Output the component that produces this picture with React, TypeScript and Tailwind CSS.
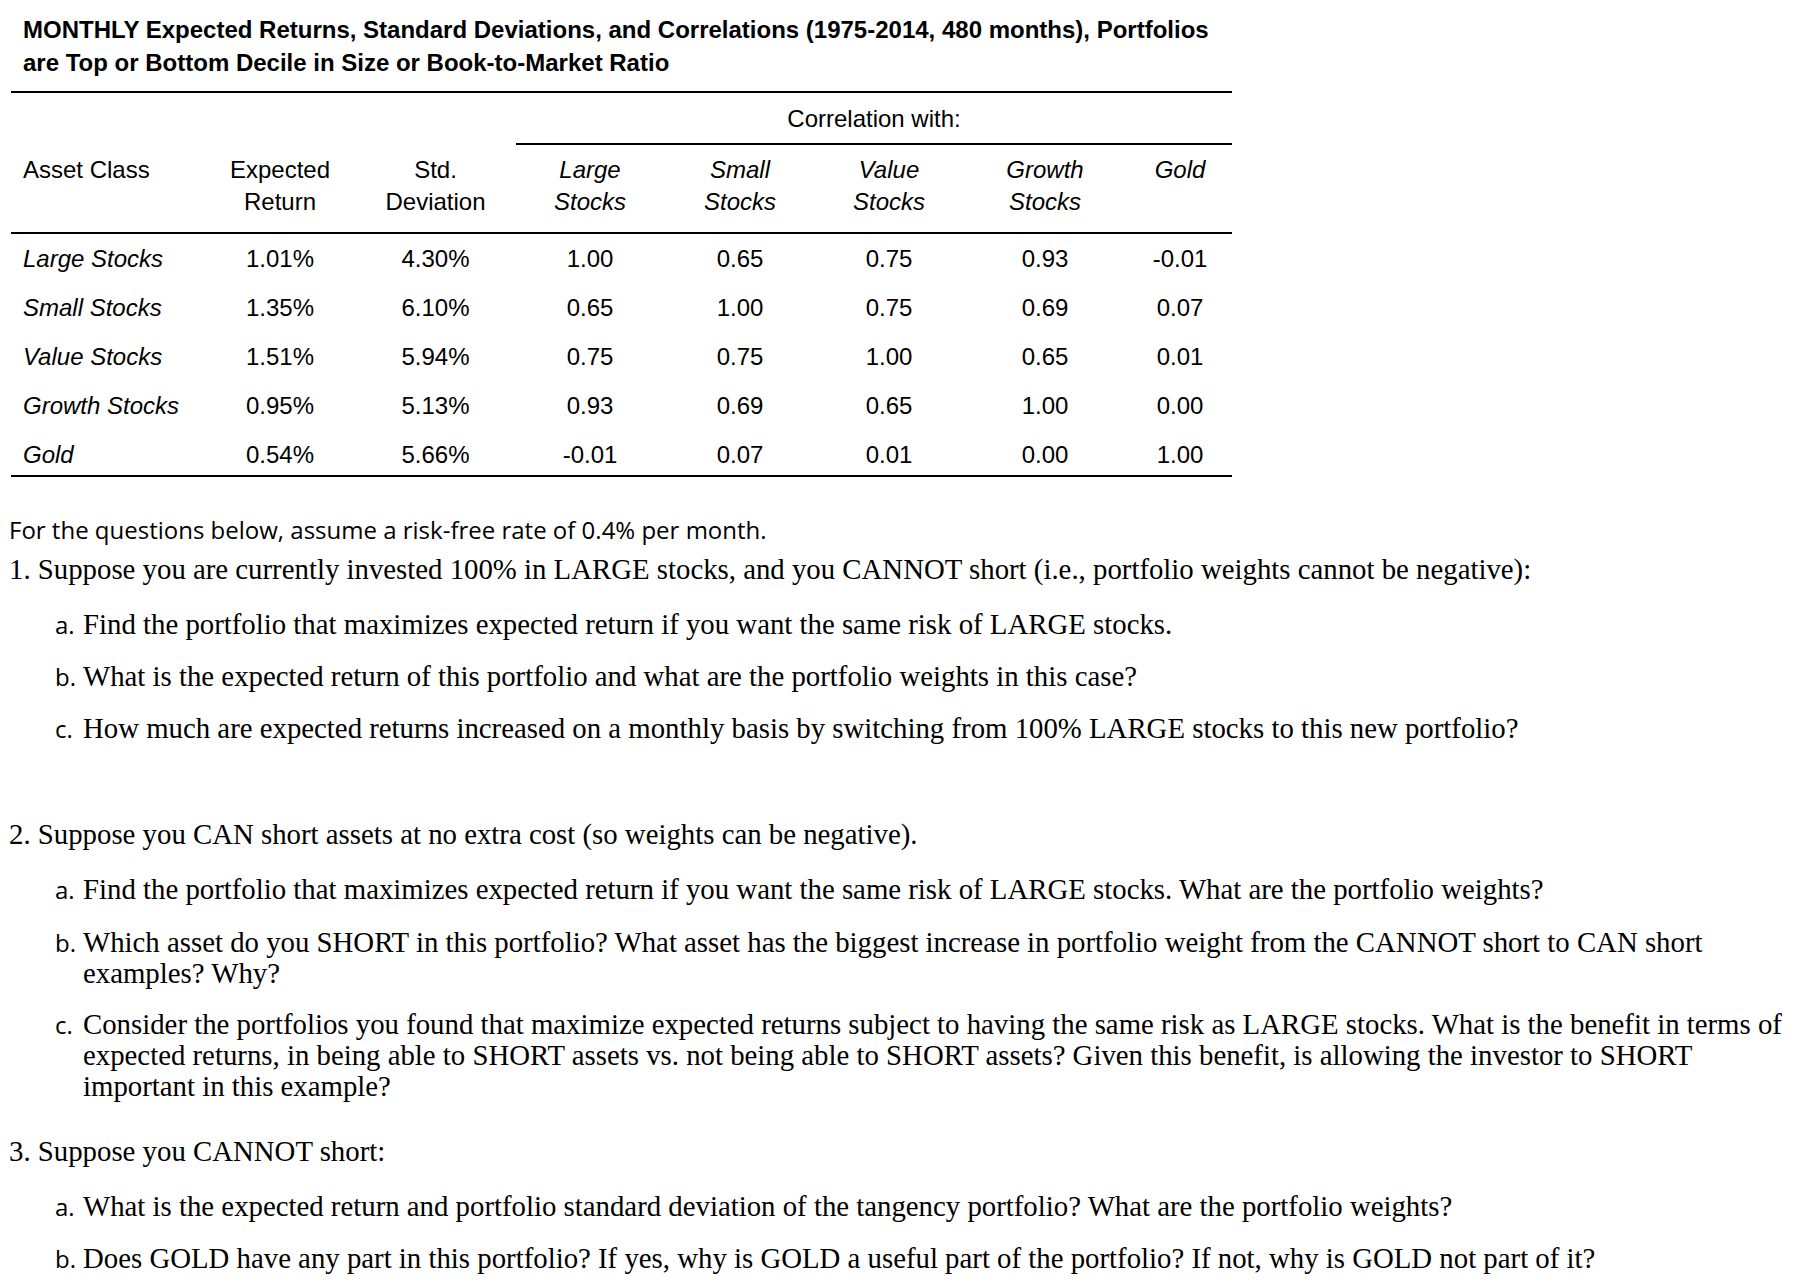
import React from "react";

const COLS = "grid grid-cols-[194px_150px_161px_148px_152px_146px_166px_104px]";

const rows: [string, string, string, string[]][] = [
  ["Large Stocks", "1.01%", "4.30%", ["1.00", "0.65", "0.75", "0.93", "-0.01"]],
  ["Small Stocks", "1.35%", "6.10%", ["0.65", "1.00", "0.75", "0.69", "0.07"]],
  ["Value Stocks", "1.51%", "5.94%", ["0.75", "0.75", "1.00", "0.65", "0.01"]],
  ["Growth Stocks", "0.95%", "5.13%", ["0.93", "0.69", "0.65", "1.00", "0.00"]],
  ["Gold", "0.54%", "5.66%", ["-0.01", "0.07", "0.01", "0.00", "1.00"]],
];

function Sub({ label, lines, className }: { label: string; lines: string[]; className: string }) {
  return (
    <div className={`flex items-start pl-[55px] leading-[31px] ${className}`}>
      <span className="w-[28px] shrink-0 h-[31px] font-['Open_Sans',sans-serif] text-[24px] leading-[31px]">{label}</span>
      <div className="font-['Liberation_Serif',serif] text-[28.8px] leading-[31px]">
        {lines.map((l, i) => (
          <div key={i} className="h-[31px] whitespace-nowrap">
            {l}
          </div>
        ))}
      </div>
    </div>
  );
}

function Main({ text, className }: { text: string; className: string }) {
  return (
    <div className={`h-[31px] pl-[9px] whitespace-nowrap font-['Liberation_Serif',serif] text-[28.8px] leading-[31px] ${className}`}>
      {text}
    </div>
  );
}

export default function App() {
  return (
    <div className="min-h-[1282px] w-full bg-white text-black overflow-hidden">
      <div className="ml-[11px] w-[1221px] font-['Liberation_Sans',Arial,sans-serif] text-[24px]">
        <div className="pl-[12px] pt-[13px] font-bold leading-[33px] whitespace-nowrap">
          MONTHLY Expected Returns, Standard Deviations, and Correlations (1975-2014, 480 months), Portfolios
          <br />
          are Top or Bottom Decile in Size or Book-to-Market Ratio
        </div>
        <div className="mt-[12px] border-t-2 border-black">
          <div className={COLS}>
            <div className="col-start-4 col-span-5 h-[52px] border-b-2 border-black flex items-center justify-center pt-[2px]">
              Correlation with:
            </div>
          </div>
          <div className={`${COLS} h-[89px] border-b-2 border-black leading-[32px] pt-[9px]`}>
            <div className="pl-[12px]">Asset Class</div>
            <div className="text-center">Expected<br />Return</div>
            <div className="text-center">Std.<br />Deviation</div>
            <div className="text-center italic">Large<br />Stocks</div>
            <div className="text-center italic">Small<br />Stocks</div>
            <div className="text-center italic">Value<br />Stocks</div>
            <div className="text-center italic">Growth<br />Stocks</div>
            <div className="text-center italic">Gold</div>
          </div>
          <div className="border-b-2 border-black">
            {rows.map(([name, er, sd, cors], i) => (
              <div
                key={name}
                className={`${COLS} ${i === rows.length - 1 ? "h-[45px]" : "h-[49px]"} pt-[11px] leading-[27px]`}
              >
                <div className="pl-[12px] italic">{name}</div>
                <div className="text-center">{er}</div>
                <div className="text-center">{sd}</div>
                {cors.map((c, j) => (
                  <div key={j} className="text-center">
                    {c}
                  </div>
                ))}
              </div>
            ))}
          </div>
        </div>
      </div>

      <div className="mt-[36px] h-[33px] pl-[9px] whitespace-nowrap font-['Open_Sans',sans-serif] text-[24px] leading-[33px]">
        For the questions below, assume a risk-free rate of 0.4% per month.
      </div>
      <Main
        className="mt-[8px]"
        text="1. Suppose you are currently invested 100% in LARGE stocks, and you CANNOT short (i.e., portfolio weights cannot be negative):"
      />
      <Sub
        className="mt-[24px]"
        label="a."
        lines={["Find the portfolio that maximizes expected return if you want the same risk of LARGE stocks."]}
      />
      <Sub
        className="mt-[21px]"
        label="b."
        lines={["What is the expected return of this portfolio and what are the portfolio weights in this case?"]}
      />
      <Sub
        className="mt-[21px]"
        label="c."
        lines={["How much are expected returns increased on a monthly basis by switching from 100% LARGE stocks to this new portfolio?"]}
      />

      <Main className="mt-[75px]" text="2. Suppose you CAN short assets at no extra cost (so weights can be negative)." />
      <Sub
        className="mt-[24px]"
        label="a."
        lines={[
          "Find the portfolio that maximizes expected return if you want the same risk of LARGE stocks. What are the portfolio weights?",
        ]}
      />
      <Sub
        className="mt-[22px]"
        label="b."
        lines={[
          "Which asset do you SHORT in this portfolio? What asset has the biggest increase in portfolio weight from the CANNOT short to CAN short",
          "examples? Why?",
        ]}
      />
      <Sub
        className="mt-[20px]"
        label="c."
        lines={[
          "Consider the portfolios you found that maximize expected returns subject to having the same risk as LARGE stocks. What is the benefit in terms of",
          "expected returns, in being able to SHORT assets vs. not being able to SHORT assets? Given this benefit, is allowing the investor to SHORT",
          "important in this example?",
        ]}
      />

      <Main className="mt-[34px]" text="3. Suppose you CANNOT short:" />
      <Sub
        className="mt-[24px]"
        label="a."
        lines={[
          "What is the expected return and portfolio standard deviation of the tangency portfolio? What are the portfolio weights?",
        ]}
      />
      <Sub
        className="mt-[21px]"
        label="b."
        lines={[
          "Does GOLD have any part in this portfolio? If yes, why is GOLD a useful part of the portfolio? If not, why is GOLD not part of it?",
        ]}
      />
    </div>
  );
}
